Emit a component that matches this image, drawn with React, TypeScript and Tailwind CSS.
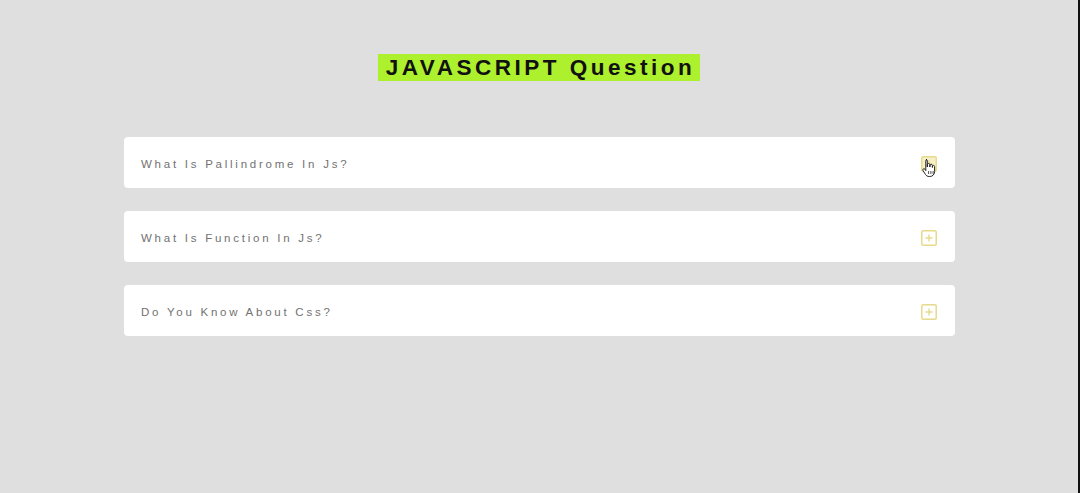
import React from "react";

const questions = [
  "What Is Pallindrome In Js?",
  "What Is Function In Js?",
  "Do You Know About Css?",
];

function PlusBox({ hover }: { hover?: boolean }) {
  return (
    <svg width="16" height="16" viewBox="0 0 16 16" className="block">
      <rect
        x="0.75"
        y="0.75"
        width="14.5"
        height="14.5"
        rx="1.5"
        fill={hover ? "#f6f0c8" : "none"}
        stroke="#e6da8c"
        strokeWidth="1.5"
      />
      <path d="M8 4.5v7M4.5 8h7" stroke="#e6da8c" strokeWidth="1.4" />
    </svg>
  );
}

function HandCursor() {
  return (
    <svg width="14" height="20" viewBox="0 0 14 20" className="block">
      <path
        d="M4 1.5c.8 0 1.3.6 1.3 1.4V9V6.8c0-.8.6-1.3 1.3-1.3s1.3.5 1.3 1.3V9V7.6c0-.8.6-1.3 1.3-1.3s1.2.5 1.2 1.3V9.5V8.6c0-.7.5-1.2 1.1-1.2s1.1.5 1.1 1.2v5c0 2.7-2 4.9-4.7 4.9H7.2c-1.6 0-2.8-.7-3.7-2L1 12.6c-.4-.7-.2-1.4.4-1.7.6-.3 1.2-.1 1.6.5l.8 1.2V2.9c0-.8.5-1.4 1.2-1.4z"
        fill="#fff"
        stroke="#222"
        strokeWidth="1"
        strokeLinejoin="round"
      />
      <path d="M6.6 13v3M8.9 13v3M11.1 13v3" stroke="#222" strokeWidth="0.8" />
    </svg>
  );
}

export default function App() {
  return (
    <div
      className="relative w-[1080px] h-[493px] bg-[#dfdfdf] border-r-2 border-[#111] overflow-hidden"
      style={{ fontFamily: '"Liberation Sans", Arial, sans-serif' }}
    >
      <div className="flex flex-col items-center pt-[54px]">
        <h1 className="bg-[#adf02e] text-[#111] font-bold text-[22.5px] leading-[27px] tracking-[3.5px] pl-[8px] pr-[5px] h-[27px]">
          JAVASCRIPT Question
        </h1>
      </div>
      <div className="ml-[124px] w-[831px] mt-[56px] flex flex-col gap-[23px]">
        {questions.map((q, i) => (
          <div
            key={q}
            className="relative bg-white rounded-[4px] h-[51px] flex items-center justify-between pl-[17px] pr-[18px]"
          >
            <span className="text-[11.5px] text-[#727272] tracking-[2.75px] pt-[4px]">{q}</span>
            <div className="relative pt-[3px]">
              <PlusBox hover={i === 0} />
              {i === 0 && (
                <div className="absolute left-[1px] top-[5px]">
                  <HandCursor />
                </div>
              )}
            </div>
          </div>
        ))}
      </div>
    </div>
  );
}
